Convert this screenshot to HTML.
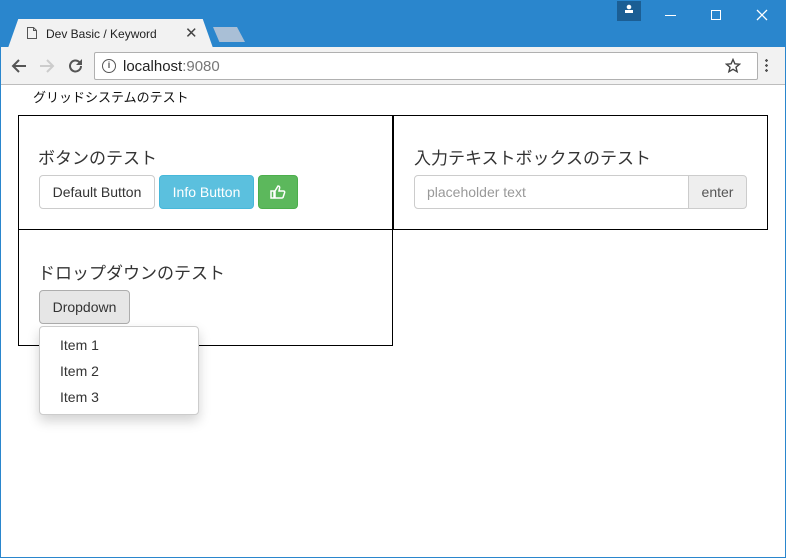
<!DOCTYPE html>
<html><head><meta charset="utf-8"><style>
*{box-sizing:border-box;margin:0;padding:0}
body{width:786px;height:558px;overflow:hidden;background:#2a86cd;font-family:"Liberation Sans","Noto Sans CJK JP",sans-serif;position:relative}
.abs{position:absolute}
.tab{position:absolute;left:8px;top:19px;width:205px;height:29px;background:#f2f2f2;clip-path:polygon(5% 0,95% 0,100% 100%,0 100%);}
.toolbar{left:1px;top:47px;width:784px;height:38px;background:#f2f2f2;border-bottom:1px solid #bdbdbd}
.content{left:1px;top:85px;width:784px;height:472px;background:#fff}
.box{position:absolute;border:1px solid #000}
h4{position:absolute;font-weight:normal;font-size:17px;color:#333}
.btn{position:absolute;height:34px;border:1px solid #ccc;border-radius:4px;font-size:14px;color:#333;text-align:center;line-height:32px;background:#fff}
</style></head><body>
<div class="tab"></div>
<svg class="abs" style="left:26px;top:26px" width="12" height="14"><path d="M1.5 1.5h6l3 3v8h-9z M7.5 1.5v3h3" fill="none" stroke="#555"/></svg>
<div class="abs" style="left:46px;top:27px;font-size:12px;color:#222">Dev Basic / Keyword</div>
<div class="abs" style="left:185px;top:24px;font-size:15px;color:#444">✕</div>
<div class="abs" style="left:213px;top:27px;width:32px;height:15px;background:#a9bfd6;clip-path:polygon(0 0,75% 0,100% 100%,20% 100%)"></div>
<div class="abs" style="left:617px;top:1px;width:24px;height:20px;background:#1b5e94"></div>
<svg class="abs" style="left:623px;top:4px" width="12" height="10"><circle cx="6" cy="3" r="2.3" fill="#fff"/><rect x="2" y="6" width="8" height="3" fill="#fff"/></svg>
<div class="abs" style="left:665px;top:15px;width:11px;height:1px;background:#fff"></div>
<div class="abs" style="left:711px;top:10px;width:10px;height:10px;border:1px solid #fff"></div>
<svg class="abs" style="left:756px;top:9px" width="12" height="12"><path d="M1 1L11 11M11 1L1 11" stroke="#fff" stroke-width="1.3"/></svg>
<div class="abs toolbar"></div>
<svg class="abs" style="left:11px;top:58px" width="16" height="16"><path d="M15 8H2M8 2L2 8l6 6" fill="none" stroke="#555" stroke-width="2"/></svg>
<svg class="abs" style="left:39px;top:58px" width="16" height="16"><path d="M1 8h13M8 2l6 6-6 6" fill="none" stroke="#ccc" stroke-width="2"/></svg>
<svg class="abs" style="left:67px;top:57px" width="18" height="18"><path d="M14 9a5.5 5.5 0 1 1-1.6-3.9" fill="none" stroke="#555" stroke-width="2"/><path d="M15 2v6h-6z" fill="#555"/></svg>
<div class="abs" style="left:94px;top:52px;width:664px;height:28px;background:#fff;border:1px solid #b0b0b0;border-radius:2px"></div>
<div class="abs" style="left:102px;top:59px;width:14px;height:14px;border:1.5px solid #555;border-radius:50%;font-size:9px;text-align:center;line-height:11px;color:#555;font-weight:bold">i</div>
<div class="abs" style="left:123px;top:58px;font-size:15px;color:#222">localhost<span style="color:#777">:9080</span></div>
<svg class="abs" style="left:725px;top:58px" width="16" height="16"><path d="M8 1.5l1.9 4.3 4.6.4-3.5 3 1.1 4.5L8 11.3l-4.1 2.4 1.1-4.5-3.5-3 4.6-.4z" fill="none" stroke="#444" stroke-width="1.4"/></svg>
<div class="abs" style="left:765px;top:58px;width:3px;height:14px;background:radial-gradient(circle,#555 1.3px,transparent 1.4px) 0 0/3px 5px"></div>
<div class="abs content"></div>
<div class="abs" style="left:33px;top:87px;font-size:13px;color:#111">グリッドシステムのテスト</div>
<div class="box" style="left:18px;top:115px;width:375px;height:115px"></div>
<div class="box" style="left:393px;top:115px;width:375px;height:115px"></div>
<div class="box" style="left:18px;top:229px;width:375px;height:117px"></div>
<h4 style="left:38px;top:144px">ボタンのテスト</h4>
<div class="btn" style="left:39px;top:175px;width:116px">Default Button</div>
<div class="btn" style="left:159px;top:175px;width:95px;background:#5bc0de;border-color:#46b8da;color:#fff">Info Button</div>
<div class="btn" style="left:258px;top:175px;width:40px;background:#5cb85c;border-color:#4cae4c;color:#fff"><svg width="16" height="14" style="margin-top:9px"><path d="M1 6h3v7H1z M5 6l3-5c1.5 0 2 1 1.5 2.5L9 6h4.5c1 0 1.5 1 1 2l-1.5 4.5c-.3.5-.7.5-1.2.5H5z" fill="none" stroke="#fff" stroke-width="1.5"/></svg></div>
<h4 style="left:414px;top:144px">入力テキストボックスのテスト</h4>
<div class="abs" style="left:414px;top:175px;width:275px;height:34px;border:1px solid #ccc;border-radius:4px 0 0 4px;font-size:14px;color:#999;padding:8px 12px">placeholder text</div>
<div class="abs" style="left:688px;top:175px;width:59px;height:34px;border:1px solid #ccc;border-radius:0 4px 4px 0;background:#eee;font-size:14px;color:#555;text-align:center;line-height:32px">enter</div>
<h4 style="left:38px;top:259px">ドロップダウンのテスト</h4>
<div class="btn" style="left:39px;top:290px;width:91px;background:#e6e6e6;border-color:#adadad">Dropdown</div>
<div class="abs" style="left:39px;top:326px;width:160px;height:89px;background:#fff;border:1px solid #ccc;border-radius:4px;box-shadow:0 6px 12px rgba(0,0,0,.175);font-size:14px;color:#333">
<div style="position:absolute;left:20px;top:10px">Item 1</div>
<div style="position:absolute;left:20px;top:36px">Item 2</div>
<div style="position:absolute;left:20px;top:62px">Item 3</div>
</div>
</body></html>
